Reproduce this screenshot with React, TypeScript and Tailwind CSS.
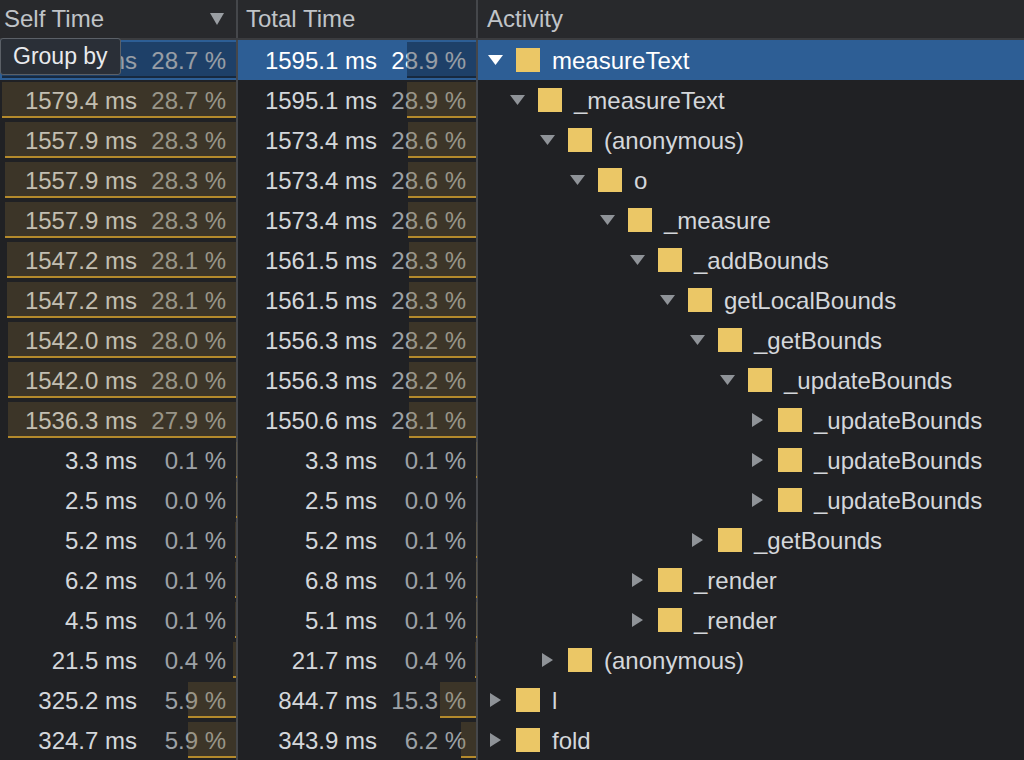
type Row = {
  self: string;
  selfPct: string;
  selfMs: number;
  total: string;
  totalPct: number;
  name: string;
  level: number;
  open: boolean;
};

const MAX_SELF = 1579.4;

const rows: Row[] = [
  { self: "1579.4 ms", selfPct: "28.7 %", selfMs: 1579.4, total: "1595.1 ms", totalPct: 28.9, name: "measureText", level: 0, open: true },
  { self: "1579.4 ms", selfPct: "28.7 %", selfMs: 1579.4, total: "1595.1 ms", totalPct: 28.9, name: "_measureText", level: 1, open: true },
  { self: "1557.9 ms", selfPct: "28.3 %", selfMs: 1557.9, total: "1573.4 ms", totalPct: 28.6, name: "(anonymous)", level: 2, open: true },
  { self: "1557.9 ms", selfPct: "28.3 %", selfMs: 1557.9, total: "1573.4 ms", totalPct: 28.6, name: "o", level: 3, open: true },
  { self: "1557.9 ms", selfPct: "28.3 %", selfMs: 1557.9, total: "1573.4 ms", totalPct: 28.6, name: "_measure", level: 4, open: true },
  { self: "1547.2 ms", selfPct: "28.1 %", selfMs: 1547.2, total: "1561.5 ms", totalPct: 28.3, name: "_addBounds", level: 5, open: true },
  { self: "1547.2 ms", selfPct: "28.1 %", selfMs: 1547.2, total: "1561.5 ms", totalPct: 28.3, name: "getLocalBounds", level: 6, open: true },
  { self: "1542.0 ms", selfPct: "28.0 %", selfMs: 1542.0, total: "1556.3 ms", totalPct: 28.2, name: "_getBounds", level: 7, open: true },
  { self: "1542.0 ms", selfPct: "28.0 %", selfMs: 1542.0, total: "1556.3 ms", totalPct: 28.2, name: "_updateBounds", level: 8, open: true },
  { self: "1536.3 ms", selfPct: "27.9 %", selfMs: 1536.3, total: "1550.6 ms", totalPct: 28.1, name: "_updateBounds", level: 9, open: false },
  { self: "3.3 ms", selfPct: "0.1 %", selfMs: 3.3, total: "3.3 ms", totalPct: 0.1, name: "_updateBounds", level: 9, open: false },
  { self: "2.5 ms", selfPct: "0.0 %", selfMs: 2.5, total: "2.5 ms", totalPct: 0.0, name: "_updateBounds", level: 9, open: false },
  { self: "5.2 ms", selfPct: "0.1 %", selfMs: 5.2, total: "5.2 ms", totalPct: 0.1, name: "_getBounds", level: 7, open: false },
  { self: "6.2 ms", selfPct: "0.1 %", selfMs: 6.2, total: "6.8 ms", totalPct: 0.1, name: "_render", level: 5, open: false },
  { self: "4.5 ms", selfPct: "0.1 %", selfMs: 4.5, total: "5.1 ms", totalPct: 0.1, name: "_render", level: 5, open: false },
  { self: "21.5 ms", selfPct: "0.4 %", selfMs: 21.5, total: "21.7 ms", totalPct: 0.4, name: "(anonymous)", level: 2, open: false },
  { self: "325.2 ms", selfPct: "5.9 %", selfMs: 325.2, total: "844.7 ms", totalPct: 15.3, name: "l", level: 0, open: false },
  { self: "324.7 ms", selfPct: "5.9 %", selfMs: 324.7, total: "343.9 ms", totalPct: 6.2, name: "fold", level: 0, open: false },
];

function TimeCell({
  ms,
  pct,
  barWidth,
  selected,
  wide,
}: {
  ms: string;
  pct: string;
  barWidth: number;
  selected: boolean;
  wide: boolean;
}) {
  return (
    <div
      className={
        (wide ? "w-[240px] " : "w-[238px] ") +
        "relative h-full flex items-center justify-end pr-[10px] pt-[1px] border-r-2 border-[#45474b] shrink-0"
      }
    >
      <span className={selected ? "text-white" : "text-[#d4d7db]"}>{ms}</span>
      <span className={"w-[89px] text-right " + (selected ? "text-white" : "text-[#9da1a6]")}>{pct}</span>
      {barWidth > 0 && (
        <div
          className={
            "absolute right-0 top-[2px] h-[36px] border-b-2 " +
            (selected
              ? "bg-[rgba(10,24,44,0.42)] border-[#17293f]"
              : "bg-[rgba(142,114,50,0.25)] border-[#b48a2c]")
          }
          style={{ width: barWidth }}
        />
      )}
    </div>
  );
}

function Arrow({ open, selected }: { open: boolean; selected: boolean }) {
  const fill = selected ? "#ffffff" : "#8f9398";
  if (open) {
    return (
      <svg width="15" height="10" viewBox="0 0 15 10" className="shrink-0">
        <polygon points="0,0 15,0 7.5,10" fill={fill} />
      </svg>
    );
  }
  return (
    <svg width="11" height="14" viewBox="0 0 11 14" className="shrink-0 ml-[2px]">
      <polygon points="0,0 11,7 0,14" fill={fill} />
    </svg>
  );
}

export default function App() {
  return (
    <div className="relative w-[1024px] h-[760px] overflow-hidden bg-[#202124] font-['Liberation_Sans',Arial,sans-serif] text-[24px] leading-none">
      {/* header */}
      <div className="flex h-[40px] bg-[#28292c] border-b-2 border-[#3b3c3f] text-[#c0c4c8]">
        <div className="w-[238px] h-full flex items-center justify-between pl-[4px] pr-[12px] border-r-2 border-[#45474b]">
          <span>Self Time</span>
          <svg width="14" height="12" viewBox="0 0 14 12">
            <polygon points="0,0 14,0 7,12" fill="#9a9ea3" />
          </svg>
        </div>
        <div className="w-[240px] h-full flex items-center pl-[8px] border-r-2 border-[#45474b]">
          Total Time
        </div>
        <div className="flex-1 h-full flex items-center pl-[9px]">Activity</div>
      </div>

      {/* rows */}
      <div className="flex flex-col">
        {rows.map((r, i) => {
          const selected = i === 0;
          const selfBar = (r.selfMs / MAX_SELF) * 234;
          const totalBar = (r.totalPct / 100) * 238;
          return (
            <div key={i} className={"flex h-[40px] " + (selected ? "bg-[#2d5e95]" : "")}>
              <TimeCell ms={r.self} pct={r.selfPct} barWidth={selfBar} selected={selected} wide={false} />
              <TimeCell
                ms={r.total}
                pct={`${r.totalPct.toFixed(1)} %`}
                barWidth={totalBar}
                selected={selected}
                wide={true}
              />
              <div
                className="flex-1 h-full flex items-center"
                style={{ paddingLeft: r.level === 0 ? 10 : 32 + 30 * (r.level - 1) }}
              >
                <div className="w-[28px] flex items-center">
                  <Arrow open={r.open} selected={selected} />
                </div>
                <div className="w-[24px] h-[24px] bg-[#ebc766] shrink-0" />
                <span className={"ml-[12px] pt-[1px] " + (selected ? "text-white" : "text-[#d4d7db]")}>{r.name}</span>
              </div>
            </div>
          );
        })}
      </div>

      {/* tooltip */}
      <div className="absolute left-0 top-[38px] w-[121px] h-[37px] flex items-center pl-[12px] bg-[#2a2f37] border border-[#5b6067] rounded-[3px] text-[#e8eaed] text-[23px]">
        Group by
      </div>
    </div>
  );
}
